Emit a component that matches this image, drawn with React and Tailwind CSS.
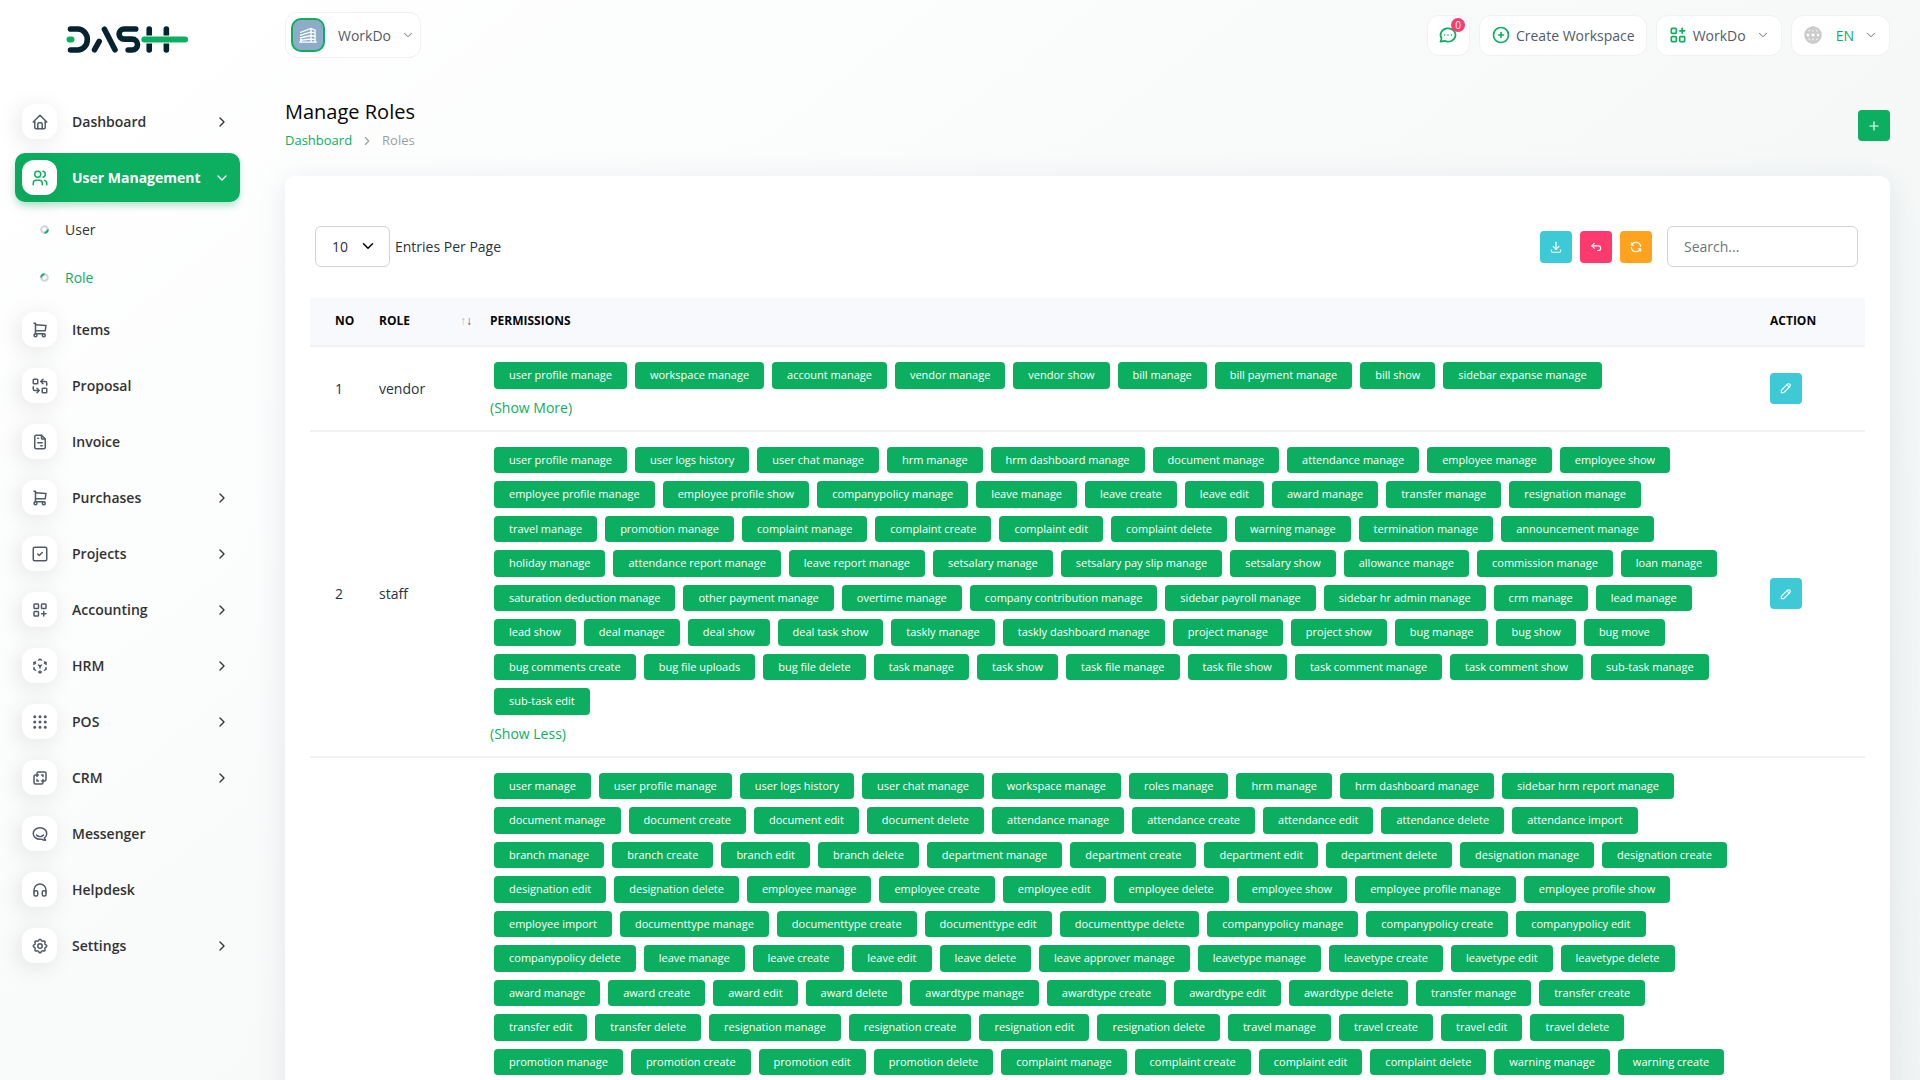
import {
  TbApps,
  TbArrowBackUp,
  TbBrandHipchat,
  TbChevronDown,
  TbChevronRight,
  TbCirclePlus,
  TbCube3dSphere,
  TbDownload,
  TbFileInvoice,
  TbGridDots,
  TbHeadphones,
  TbHome,
  TbLayersDifference,
  TbLayoutGridAdd,
  TbPencil,
  TbPlus,
  TbRefresh,
  TbReplace,
  TbSettings,
  TbShoppingCart,
  TbSquareCheck,
  TbUsers,
  TbWorld,
} from 'react-icons/tb'

const NAV = [
  { label: 'Dashboard', icon: TbHome, expandable: true },
  {
    label: 'User Management',
    icon: TbUsers,
    expandable: true,
    active: true,
    children: [{ label: 'User' }, { label: 'Role', active: true }],
  },
  { label: 'Items', icon: TbShoppingCart },
  { label: 'Proposal', icon: TbReplace },
  { label: 'Invoice', icon: TbFileInvoice },
  { label: 'Purchases', icon: TbShoppingCart, expandable: true },
  { label: 'Projects', icon: TbSquareCheck, expandable: true },
  { label: 'Accounting', icon: TbLayoutGridAdd, expandable: true },
  { label: 'HRM', icon: TbCube3dSphere, expandable: true },
  { label: 'POS', icon: TbGridDots, expandable: true },
  { label: 'CRM', icon: TbLayersDifference, expandable: true },
  { label: 'Messenger', icon: TbBrandHipchat },
  { label: 'Helpdesk', icon: TbHeadphones },
  { label: 'Settings', icon: TbSettings, expandable: true },
]

const CRUD = ['manage', 'create', 'edit', 'delete']

const grant = (name, actions = CRUD) => actions.map((action) => `${name} ${action}`)

const ROLES = [
  {
    name: 'vendor',
    toggle: '(Show More)',
    permissions: [
      'user profile manage', 'workspace manage', 'account manage', 'vendor manage', 'vendor show',
      'bill manage', 'bill payment manage', 'bill show', 'sidebar expanse manage',
    ],
  },
  {
    name: 'staff',
    toggle: '(Show Less)',
    permissions: [
      'user profile manage', 'user logs history', 'user chat manage', 'hrm manage',
      'hrm dashboard manage', 'document manage', 'attendance manage',
      ...grant('employee', ['manage', 'show']),
      ...grant('employee profile', ['manage', 'show']),
      'companypolicy manage',
      ...grant('leave', ['manage', 'create', 'edit']),
      'award manage', 'transfer manage', 'resignation manage', 'travel manage', 'promotion manage',
      ...grant('complaint'),
      'warning manage', 'termination manage', 'announcement manage', 'holiday manage',
      'attendance report manage', 'leave report manage', 'setsalary manage',
      'setsalary pay slip manage', 'setsalary show', 'allowance manage', 'commission manage',
      'loan manage', 'saturation deduction manage', 'other payment manage', 'overtime manage',
      'company contribution manage', 'sidebar payroll manage', 'sidebar hr admin manage',
      'crm manage',
      ...grant('lead', ['manage', 'show']),
      ...grant('deal', ['manage', 'show', 'task show']),
      'taskly manage', 'taskly dashboard manage',
      ...grant('project', ['manage', 'show']),
      ...grant('bug', ['manage', 'show', 'move', 'comments create', 'file uploads', 'file delete']),
      ...grant('task', ['manage', 'show', 'file manage', 'file show', 'comment manage', 'comment show']),
      ...grant('sub-task', ['manage', 'edit']),
    ],
  },
  {
    name: 'company',
    toggle: '(Show Less)',
    permissions: [
      'user manage', 'user profile manage', 'user logs history', 'user chat manage',
      'workspace manage', 'roles manage', 'hrm manage', 'hrm dashboard manage',
      'sidebar hrm report manage',
      ...grant('document'),
      ...grant('attendance', [...CRUD, 'import']),
      ...grant('branch'),
      ...grant('department'),
      ...grant('designation'),
      ...grant('employee', [...CRUD, 'show', 'profile manage', 'profile show', 'import']),
      ...grant('documenttype'),
      ...grant('companypolicy'),
      ...grant('leave', [...CRUD, 'approver manage']),
      ...grant('leavetype'),
      ...grant('award'),
      ...grant('awardtype'),
      ...grant('transfer'),
      ...grant('resignation'),
      ...grant('travel'),
      ...grant('promotion'),
      ...grant('complaint'),
      ...grant('warning'),
      ...grant('termination'),
      ...grant('terminationtype'),
      ...grant('announcement'),
      ...grant('holiday'),
      ...grant('allowance'),
      ...grant('allowanceoption'),
      ...grant('commission'),
      ...grant('loan'),
      ...grant('loanoption'),
      ...grant('saturation deduction'),
      ...grant('deductionoption'),
      ...grant('other payment'),
      ...grant('overtime'),
      ...grant('company contribution'),
      ...grant('lead'),
      ...grant('deal'),
      ...grant('project'),
      ...grant('bug'),
      ...grant('task'),
      ...grant('sub-task'),
      ...grant('vendor'),
      ...grant('bill'),
      ...grant('pipeline'),
      ...grant('warehouse'),
      ...grant('purchase'),
    ],
  },
]

function Logo() {
  return (
    <svg viewBox="198 79 370 82" className="h-[27px] w-[123px]" fill="none" role="img" aria-label="Dash">
      <g stroke="#06232f" strokeWidth="17" strokeLinecap="round" strokeLinejoin="round">
        <path d="M210 88H232A29 32 0 0 1 232 152H210" />
        <path d="M297 126 283 151M313 89 345 151" />
        <path d="M408 88H373A15 15 0 0 0 373 119H397A16 16 0 0 1 397 152H385" />
        <path d="M449 88V152M501 88V152" />
      </g>
      <path d="M424 120H572" stroke="#fff" strokeWidth="24" />
      <path d="M434 120H558" stroke="#0caf60" strokeWidth="18" strokeLinecap="round" />
      <path d="M207 120H213" stroke="#0caf60" strokeWidth="18" strokeLinecap="round" />
    </svg>
  )
}

function Building() {
  return (
    <svg viewBox="0 0 18 16" className="h-4 w-[18px]" fill="none" stroke="#fff" strokeWidth="1.3">
      <path d="M1 5.5 12 1.5 17 3.5M1 8.3 12 5 17 6.5M1 11 12 8.5 17 9.5M1 13.4 12 12 17 12.7M0 15.2H18M12 1.5V15M2 12V15M16 4V15" />
    </svg>
  )
}

function ChatBubble() {
  return (
    <svg
      viewBox="0 0 24 24"
      className="size-5"
      fill="none"
      stroke="currentColor"
      strokeWidth="2"
      strokeLinecap="round"
      strokeLinejoin="round"
    >
      <path d="M3 20l1.3 -3.9a9 8 0 1 1 3.4 2.9l-4.7 1M12 12v.01M8 12v.01M16 12v.01" />
    </svg>
  )
}

function Bullet({ active }) {
  return (
    <svg viewBox="0 0 9 9" className="size-[9px] shrink-0" fill="none" strokeWidth="2">
      <circle cx="4.5" cy="4.5" r="3.3" stroke="#ced4dc" />
      <path d={active ? 'M1.2 4.5A3.3 3.3 0 0 1 4.5 1.2' : 'M7.8 4.5A3.3 3.3 0 0 1 4.5 7.8'} stroke="#0caf60" />
    </svg>
  )
}

function NavItem({ item }) {
  const Icon = item.icon
  const Chevron = item.active ? TbChevronDown : TbChevronRight
  return (
    <li>
      <a
        href="#"
        className={
          item.active
            ? 'flex h-[49px] items-center rounded-[10px] bg-[#0caf60] px-[7px] font-bold text-white shadow-[0_5px_7px_-1px_rgba(12,175,96,0.3)]'
            : 'flex h-[49px] items-center rounded-[10px] px-[7px] font-semibold text-[#333]'
        }
      >
        <span
          className={
            item.active
              ? 'mr-[15px] flex size-[35px] shrink-0 items-center justify-center rounded-xl bg-white text-[#0caf60] shadow-[-3px_4px_23px_rgba(0,0,0,0.1)]'
              : 'mr-[15px] flex size-[35px] shrink-0 items-center justify-center rounded-xl bg-white text-[#525b69] shadow-[-3px_4px_23px_rgba(0,0,0,0.1)]'
          }
        >
          <Icon size={18} />
        </span>
        <span className="grow whitespace-nowrap">{item.label}</span>
        {item.expandable && <Chevron size={16} className="mr-[3px] shrink-0" />}
      </a>
      {item.children && (
        <ul className="mt-[3px] -mb-[3px]">
          {item.children.map((child) => (
            <li key={child.label}>
              <a
                href="#"
                className={
                  child.active
                    ? 'flex h-12 items-center gap-4 pl-[25px] font-medium text-[#0caf60]'
                    : 'flex h-12 items-center gap-4 pl-[25px] font-medium text-[#333]'
                }
              >
                <Bullet active={child.active} />
                {child.label}
              </a>
            </li>
          ))}
        </ul>
      )}
    </li>
  )
}

function Sidebar() {
  return (
    <aside className="w-[255px] shrink-0 px-[15px]">
      <a href="#" className="flex h-[97px] justify-center pt-[26px]">
        <Logo />
      </a>
      <ul className="flex flex-col gap-[7px]">
        {NAV.map((item) => (
          <NavItem key={item.label} item={item} />
        ))}
      </ul>
    </aside>
  )
}

function TopBar() {
  const box = 'flex h-[41px] items-center rounded-xl border border-[#f1f1f1] bg-white'
  return (
    <header className="flex items-center justify-between pt-3 font-medium text-[#525b69]">
      <button className="flex h-[46px] items-center rounded-xl border border-[#f1f1f1] bg-white px-[5px]">
        <span className="flex size-[34px] items-center justify-center rounded-[10px] border-2 border-[#0caf60] bg-[#8cacc8]">
          <Building />
        </span>
        <span className="ml-[13px]">WorkDo</span>
        <TbChevronDown size={14} strokeWidth={1.5} className="ml-[10px]" />
      </button>
      <div className="flex gap-[9px]">
        <button aria-label="Messages" className={`${box} relative w-[43px] justify-center text-[#0caf60]`}>
          <ChatBubble />
          <span className="absolute top-0.5 right-1 rounded-full bg-[#ff3a6e] px-1 text-[10px] leading-[14px] text-white">
            0
          </span>
        </button>
        <button className={`${box} px-[11px]`}>
          <TbCirclePlus size={20} className="mr-[5px] text-[#0caf60]" />
          Create Workspace
        </button>
        <button className={`${box} px-[11px]`}>
          <TbApps size={20} className="mr-[5px] text-[#0caf60]" />
          WorkDo
          <TbChevronDown size={14} strokeWidth={1.5} className="ml-[10px]" />
        </button>
        <button className={`${box} px-[11px]`}>
          <TbWorld size={20} strokeWidth={3} className="mr-[13px] text-[#ccc]" />
          <span className="text-[#0caf60]">EN</span>
          <TbChevronDown size={14} strokeWidth={1.5} className="ml-[10px]" />
        </button>
      </div>
    </header>
  )
}

function Toolbar() {
  const action = 'flex size-8 items-center justify-center rounded text-white'
  return (
    <div className="flex items-center justify-between pr-[7px] pl-[5px]">
      <label className="flex items-center gap-[5px]">
        <span className="relative">
          <select className="h-[41px] w-[75px] appearance-none rounded-md border border-[#ced4da] bg-white pl-4">
            <option>10</option>
            <option>25</option>
          </select>
          <svg
            viewBox="0 0 16 16"
            className="pointer-events-none absolute top-3 right-4 h-4 w-3"
            fill="none"
            stroke="#000"
            strokeWidth="2"
            strokeLinecap="round"
            strokeLinejoin="round"
          >
            <path d="m2 5 6 6 6-6" />
          </svg>
        </span>
        Entries Per Page
      </label>
      <div className="flex items-center gap-2">
        <button aria-label="Export" className={`${action} bg-[#3ec9d6]`}>
          <TbDownload size={14} />
        </button>
        <button aria-label="Reset" className={`${action} bg-[#ff3a6e]`}>
          <TbArrowBackUp size={14} />
        </button>
        <button aria-label="Reload" className={`${action} bg-[#ffa21d]`}>
          <TbRefresh size={14} />
        </button>
        <input
          type="search"
          aria-label="Search"
          placeholder="Search..."
          className="ml-[7px] h-[41px] w-[191px] rounded-md border border-[#ced4da] px-4 placeholder:text-[#6c757d]"
        />
      </div>
    </div>
  )
}

function RolesTable() {
  return (
    <table className="w-full table-fixed text-left">
      <thead>
        <tr className="h-12 border-b-2 border-[#f1f1f1] bg-[#f8f9fd] text-xs font-bold text-[#060606]">
          <th className="w-[59px] pb-0.5 pl-[25px]">NO</th>
          <th className="w-[111px] pr-2 pb-0.5 pl-[10px]">
            <span className="flex items-center justify-between">
              ROLE
              <span className="font-normal text-[#bbb]">
                ↑<span className="text-[#555]">↓</span>
              </span>
            </span>
          </th>
          <th className="px-[10px] pb-0.5">PERMISSIONS</th>
          <th className="w-[105px] px-[10px] pb-0.5">ACTION</th>
        </tr>
      </thead>
      <tbody>
        {ROLES.map((role, i) => (
          <tr key={role.name} className="border-b-2 border-[#f1f1f1]">
            <td className="pl-[25px]">{i + 1}</td>
            <td className="px-[10px]">{role.name}</td>
            <td className="px-[10px] pt-[11px] pb-3">
              <ul className="m-1 flex flex-wrap gap-2">
                {role.permissions.map((permission) => (
                  <li
                    key={permission}
                    className="rounded bg-[#0caf60] px-[15px] py-[5px] text-[11px] leading-normal whitespace-nowrap text-white"
                  >
                    {permission}
                  </li>
                ))}
              </ul>
              <a href="#" className="mt-2 block text-[#0caf60]">
                {role.toggle}
              </a>
            </td>
            <td className="px-[10px]">
              <button
                aria-label={`Edit ${role.name}`}
                className="flex h-[31px] w-8 items-center justify-center rounded bg-[#3ec9d6] text-white"
              >
                <TbPencil size={14} />
              </button>
            </td>
          </tr>
        ))}
      </tbody>
    </table>
  )
}

export default function App() {
  return (
    <div className="flex min-h-screen bg-[linear-gradient(141.55deg,rgba(240,244,243,0)_3.46%,#f0f4f3_99.86%)] bg-fixed font-['Open_Sans',sans-serif] text-sm leading-[21px] text-[#293240]">
      <Sidebar />
      <div className="min-w-0 grow px-[30px] pb-[30px]">
        <TopBar />
        <div className="mt-[39px] flex items-start justify-between">
          <div>
            <h1 className="text-xl leading-[30px] font-medium text-[#060606]">Manage Roles</h1>
            <nav className="mt-[3px] flex items-center gap-2 text-[13px] text-[#999ea4]">
              <a href="#" className="text-[#0caf60]">
                Dashboard
              </a>
              <TbChevronRight size={14} />
              <span>Roles</span>
            </nav>
          </div>
          <button
            aria-label="Create role"
            className="mt-[13px] flex h-[31px] w-8 items-center justify-center rounded bg-[#0caf60] text-white"
          >
            <TbPlus size={14} />
          </button>
        </div>
        <main className="mt-[25px] rounded-[10px] bg-white px-[25px] py-[50px] shadow-[0_6px_30px_rgba(182,186,203,0.3)]">
          <Toolbar />
          <div className="mt-[31px]">
            <RolesTable />
          </div>
        </main>
      </div>
    </div>
  )
}
